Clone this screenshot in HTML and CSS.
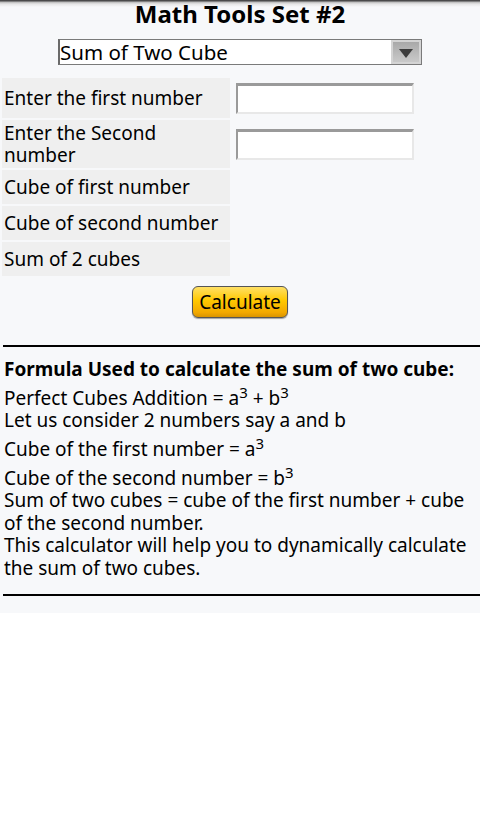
FILE: index.html
```html
<!DOCTYPE html>
<html>
<head>
<meta charset="utf-8">
<link rel="stylesheet" href="styles.css">
</head>
<body>
<div class="page">
  <h1 class="title">Math Tools Set #2</h1>
  <div class="select-row">
    <div class="select">
      <span class="select-text">Sum of Two Cube</span>
      <span class="select-btn"><span class="tri"></span></span>
    </div>
  </div>
  <table class="calc">
    <tr class="r1">
      <td class="lbl">Enter the first number</td>
      <td class="inp"><div class="field"></div></td>
    </tr>
    <tr class="r2">
      <td class="lbl">Enter the Second number</td>
      <td class="inp"><div class="field"></div></td>
    </tr>
    <tr class="r3">
      <td class="lbl">Cube of first number</td>
      <td class="inp"></td>
    </tr>
    <tr class="r3">
      <td class="lbl">Cube of second number</td>
      <td class="inp"></td>
    </tr>
    <tr class="r3">
      <td class="lbl">Sum of 2 cubes</td>
      <td class="inp"></td>
    </tr>
  </table>
  <div class="btn-row"><span class="btn">Calculate</span></div>
  <div class="rule rule1"></div>
  <div class="formula">
    <div class="fhead">Formula Used to calculate the sum of two cube:</div>
    <div>Perfect Cubes Addition = a<sup>3</sup> + b<sup>3</sup></div>
    <div>Let us consider 2 numbers say a and b</div>
    <div>Cube of the first number = a<sup>3</sup></div>
    <div>Cube of the second number = b<sup>3</sup></div>
    <div>Sum of two cubes = cube of the first number + cube of the second number.</div>
    <div>This calculator will help you to dynamically calculate the sum of two cubes.</div>
  </div>
  <div class="rule rule2"></div>
</div>
</body>
</html>
```
FILE: styles.css
```css
html, body {
  margin: 0;
  padding: 0;
  background: #ffffff;
}
body {
  font-family: "Noto Sans", "Open Sans", "DejaVu Sans", sans-serif;
  color: #000;
  font-size: 19px;
}
.page {
  background: linear-gradient(to bottom, #4a4a4a 0, #4a4a4a 1px, #b8b8b8 2px, #e6e6e6 4px, #f7f8fa 7px, #f7f8fa 100%);
  padding-bottom: 17px;
}
.title {
  margin: 0;
  text-align: center;
  font-size: 24px;
  font-weight: bold;
  line-height: 28px;
}
.select-row {
  display: flex;
  justify-content: center;
  margin-top: 11px;
}
.select {
  width: 364px;
  height: 26px;
  box-sizing: border-box;
  background: #fff;
  border: 1px solid #7a7a7a;
  border-left: 2px solid #6a6a6a;
  display: flex;
  align-items: center;
  justify-content: space-between;
}
.select-text {
  font-size: 20.5px;
  line-height: 24px;
}
.select-btn {
  width: 30px;
  height: 24px;
  box-sizing: border-box;
  border: 2px solid #d4d4d4;
  background: linear-gradient(to bottom, #a9a9a9, #c9c9c9);
  display: flex;
  justify-content: center;
  align-items: center;
}
.tri {
  width: 0;
  height: 0;
  border-left: 7px solid transparent;
  border-right: 7px solid transparent;
  border-top: 9px solid #3c3c3c;
  margin-top: 2px;
}
.calc {
  border-spacing: 2px;
  margin-top: 11px;
}
.lbl {
  width: 228px;
  box-sizing: border-box;
  background: #efefef;
  padding: 1px 2px;
  line-height: 22px;
  vertical-align: middle;
}
.inp {
  padding: 0 0 0 4px;
  vertical-align: middle;
}
.r1 { height: 40px; }
.r2 { height: 48px; }
.r3 { height: 34px; }
.field {
  width: 178px;
  height: 31px;
  box-sizing: border-box;
  background: #fff;
  border-top: 3px solid #9a9a9a;
  border-left: 2px solid #9a9a9a;
  border-right: 2px solid #e8e8e8;
  border-bottom: 2px solid #e8e8e8;
}
.btn-row {
  display: flex;
  justify-content: center;
  margin-top: 8px;
}
.btn {
  width: 96px;
  height: 32px;
  box-sizing: border-box;
  border: 1px solid #555;
  border-radius: 6px;
  background: linear-gradient(to bottom, #ffe066 0%, #ffc800 45%, #f2a800 85%, #d99400 100%);
  box-shadow: 0 1px 1px rgba(0,0,0,0.35);
  font-size: 19px;
  line-height: 30px;
  text-align: center;
}
.rule {
  height: 2px;
  background: #000;
  margin-left: 3px;
}
.rule1 { margin-top: 27px; }
.formula {
  padding: 11px 4px 0 4px;
  line-height: 22.5px;
}
.fhead {
  font-weight: bold;
}
sup {
  font-size: 15px;
}
.rule2 {
  margin-top: 15px;
}
```
